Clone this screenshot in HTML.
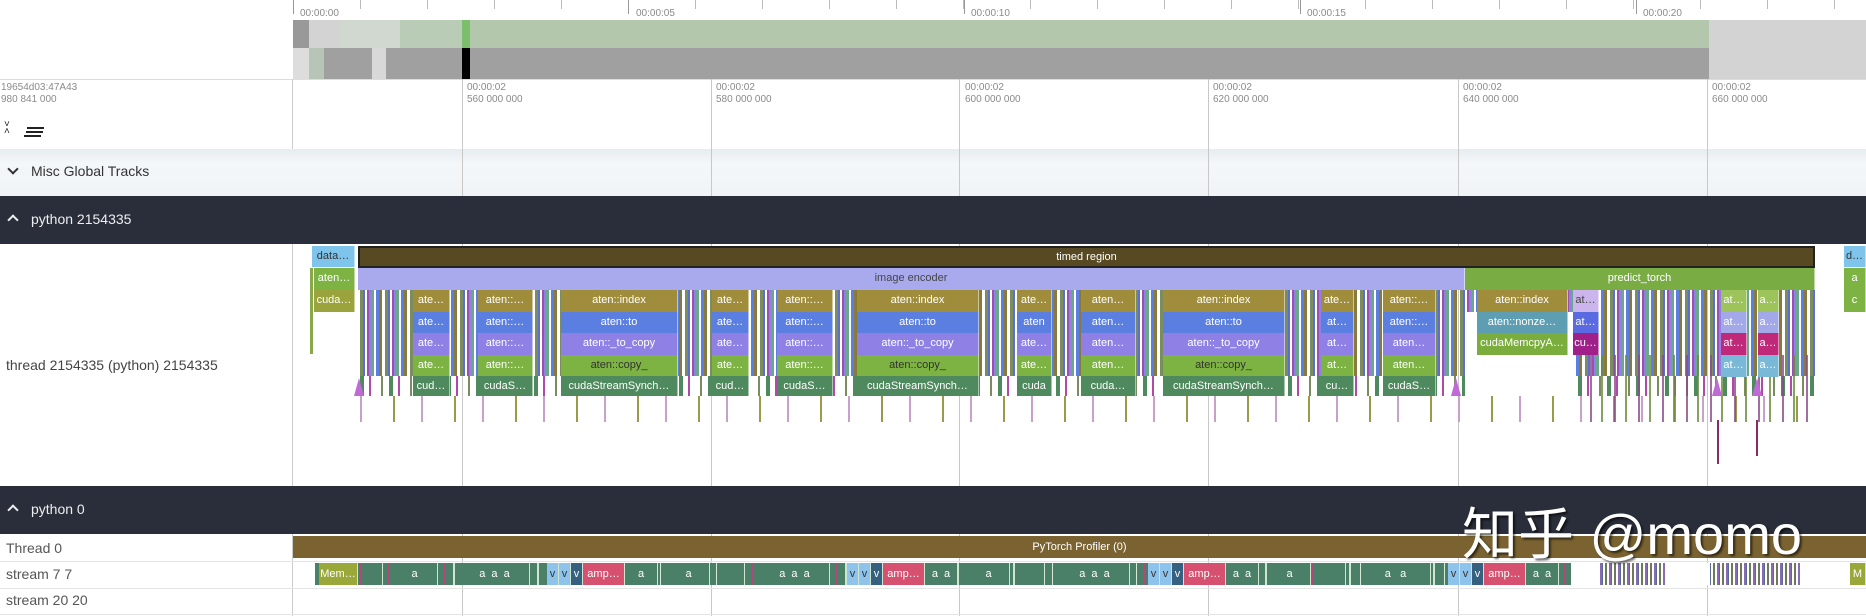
<!DOCTYPE html>
<html><head><meta charset="utf-8"><style>
*{margin:0;padding:0;box-sizing:border-box}
body{width:1866px;height:616px;overflow:hidden;background:#fff;font-family:"Liberation Sans","Noto Sans CJK SC",sans-serif;position:relative}
.a{position:absolute}
.s{position:absolute;height:22px;font-size:11px;color:#fff;text-align:center;line-height:21px;overflow:hidden;white-space:nowrap;border-right:1px solid rgba(255,255,255,.5)}
.tl{position:absolute;font-size:10px;color:#8a8a8a;line-height:12px}
.g{position:absolute;width:1px;background:#dcdcdc}
.lab{position:absolute;left:6px;font-size:14px;color:#444}
.A{background:#a08d3c}.B{background:#5b7fe0}.C{background:#8f80e6}.D{background:#7cb342}.E{background:#4f8a5e}
.st{position:absolute;top:563px;height:22px;font-size:11px;color:#fff;line-height:22px;text-align:center;overflow:hidden;white-space:nowrap;border-right:1px solid #cfe5cf}
</style></head><body>

<div class="a" style="left:293px;top:0;width:1573px;height:9px;background:repeating-linear-gradient(90deg,#bbb 0 1px,transparent 1px 67px)"></div>
<div class="a" style="left:293px;top:0;width:1px;height:14px;background:#999"></div>
<div class="a" style="left:628px;top:0;width:1px;height:14px;background:#999"></div>
<div class="a" style="left:964px;top:0;width:1px;height:14px;background:#999"></div>
<div class="a" style="left:1300px;top:0;width:1px;height:14px;background:#999"></div>
<div class="a" style="left:1636px;top:0;width:1px;height:14px;background:#999"></div>
<div class="tl" style="left:300px;top:8px">00:00:00</div>
<div class="tl" style="left:636px;top:8px">00:00:05</div>
<div class="tl" style="left:971px;top:8px">00:00:10</div>
<div class="tl" style="left:1307px;top:8px">00:00:15</div>
<div class="tl" style="left:1643px;top:8px">00:00:20</div>

<div class="a" style="left:293px;top:20px;width:1416px;height:28px;background:linear-gradient(90deg,#999 0 16px,#d3d3d3 16px 47px,#d0d8cf 47px 107px,#b9ccb5 107px 169px,#7cbf6a 169px 177px,#b3c7ad 177px)"></div>
<div class="a" style="left:293px;top:48px;width:1416px;height:31px;background:linear-gradient(90deg,#ddd 0 16px,#b7c5b7 16px 31px,#a0a0a0 31px 79px,#d8d8d8 79px 93px,#a0a0a0 93px 169px,#000 169px 177px,#a0a0a0 177px)"></div>
<div class="a" style="left:1709px;top:20px;width:157px;height:59px;background:#d3d3d3"></div>
<div class="a" style="left:0;top:79px;width:1866px;height:1px;background:#ddd"></div>

<div class="tl" style="left:1px;top:82px">19654d03:47A43<br>980 841 000</div>
<div class="a" style="left:4px;top:121px;font-size:10px;line-height:7px;color:#222">˅<br>˄</div>
<div class="a" style="left:27px;top:127px;width:17px;height:2px;background:#222;box-shadow:-1px 4px 0 #222,-3px 8px 0 #222"></div>
<div class="a" style="left:292px;top:79px;width:1px;height:537px;background:#ccc"></div>
<div class="tl" style="left:467px;top:82px">00:00:02<br>560 000 000</div>
<div class="tl" style="left:716px;top:82px">00:00:02<br>580 000 000</div>
<div class="tl" style="left:965px;top:82px">00:00:02<br>600 000 000</div>
<div class="tl" style="left:1213px;top:82px">00:00:02<br>620 000 000</div>
<div class="tl" style="left:1463px;top:82px">00:00:02<br>640 000 000</div>
<div class="tl" style="left:1712px;top:82px">00:00:02<br>660 000 000</div>

<div class="a" style="left:0;top:149px;width:1866px;height:47px;background:linear-gradient(#e6ecf0,#f4f7f9 30%,#f0f4f6)"></div>
<div class="a" style="left:6px;top:163px;font-size:14px;color:#333"><span style="display:inline-block;width:8px;height:8px;border-right:2px solid #333;border-bottom:2px solid #333;transform:rotate(45deg);margin:0 14px 3px 3px"></span>Misc Global Tracks</div>

<div class="g" style="left:462px;top:79px;height:537px;background:#c8c8c8"></div>
<div class="g" style="left:711px;top:79px;height:537px;background:#c8c8c8"></div>
<div class="g" style="left:959px;top:79px;height:537px;background:#c8c8c8"></div>
<div class="g" style="left:1208px;top:79px;height:537px;background:#c8c8c8"></div>
<div class="g" style="left:1458px;top:79px;height:537px;background:#c8c8c8"></div>
<div class="g" style="left:1707px;top:79px;height:537px;background:#c8c8c8"></div>

<div class="a" style="left:0;top:196px;width:1866px;height:48px;background:#2a2e3a"></div>
<div class="a" style="left:6px;top:211px;font-size:14px;color:#eee"><span style="display:inline-block;width:8px;height:8px;border-left:2px solid #eee;border-top:2px solid #eee;transform:rotate(45deg);margin:0 14px 0 3px"></span>python 2154335</div>

<div class="lab" style="top:357px">thread 2154335 (python) 2154335</div>

<div class="s" style="left:312px;top:246px;width:43px;height:21px;background:#7fc4ea;color:#333">data…</div>
<div class="s" style="left:314px;top:268px;width:41px;background:#7cb342">aten…</div>
<div class="s" style="left:314px;top:290px;width:41px;background:#9aa33c">cuda…</div>
<div class="a" style="left:310px;top:268px;width:3px;height:86px;background:#88a84a"></div>

<div class="s" style="left:358px;top:246px;width:1457px;height:22px;background:#574a22;border:2px solid #222;line-height:18px">timed region</div>
<div class="s" style="left:358px;top:268px;width:1107px;background:#a9aaee;color:#444">image encoder</div>
<div class="s" style="left:1465px;top:268px;width:350px;background:#7aac44">predict_torch</div>
<div class="s" style="left:1844px;top:246px;width:22px;height:21px;background:#7fc4ea;color:#333">d…</div>
<div class="s" style="left:1844px;top:268px;width:22px;background:#7cb342">a</div>
<div class="s" style="left:1844px;top:290px;width:22px;background:#7cb342">c</div>

<!-- noise stripes (denser) -->
<div class="a" style="left:360px;top:290px;width:1455px;height:86px;background:repeating-linear-gradient(90deg,#7b8c5e 0 3px,#5a6fd0 3px 5px,transparent 5px 7px,#9b4fae 7px 9px,#8f80e6 9px 11px,#6aa88a 11px 14px,transparent 14px 16px,#5b7fe0 16px 19px,#8a7a3a 19px 22px,transparent 22px 25px)"></div>
<div class="a" style="left:360px;top:376px;width:1455px;height:20px;background:repeating-linear-gradient(90deg,#4f8a5e 0 4px,transparent 4px 9px,#b04aa8 9px 11px,transparent 11px 21px,#7b8c5e 21px 23px,transparent 23px 29px)"></div>
<div class="a" style="left:360px;top:396px;width:1455px;height:26px;background:repeating-linear-gradient(90deg,#c9a0c9 0 2px,transparent 2px 33px,#9a9a4a 33px 35px,transparent 35px 61px)"></div>
<div class="a" style="left:1465px;top:312px;width:10px;height:110px;background:#fff"></div>
<div class="a" style="left:1590px;top:355px;width:225px;height:67px;background:repeating-linear-gradient(90deg,#8a4a8a 0 2px,transparent 2px 11px,#6a8a3a 11px 13px,transparent 13px 24px);opacity:.8"></div>

<div class="s A" style="left:413px;top:290px;width:37px">ate…</div><div class="s B" style="left:413px;top:312px;width:37px">ate…</div><div class="s C" style="left:413px;top:333px;width:37px">ate…</div><div class="s D" style="left:413px;top:355px;width:37px">ate…</div><div class="s E" style="left:413px;top:376px;width:37px;height:20px">cud…</div>
<div class="s A" style="left:478px;top:290px;width:55px">aten::…</div><div class="s B" style="left:478px;top:312px;width:55px">aten::…</div><div class="s C" style="left:478px;top:333px;width:55px">aten::…</div><div class="s D" style="left:478px;top:355px;width:55px">aten::…</div><div class="s E" style="left:478px;top:376px;width:55px;height:20px">cudaS…</div>
<div class="s A" style="left:561px;top:290px;width:117px">aten::index</div><div class="s B" style="left:561px;top:312px;width:117px">aten::to</div><div class="s C" style="left:561px;top:333px;width:117px">aten::_to_copy</div><div class="s D" style="left:561px;top:355px;width:117px;color:#333">aten::copy_</div><div class="s E" style="left:561px;top:376px;width:117px;height:20px">cudaStreamSynch…</div>
<div class="s A" style="left:712px;top:290px;width:37px">ate…</div><div class="s B" style="left:712px;top:312px;width:37px">ate…</div><div class="s C" style="left:712px;top:333px;width:37px">ate…</div><div class="s D" style="left:712px;top:355px;width:37px">ate…</div><div class="s E" style="left:712px;top:376px;width:37px;height:20px">cud…</div>
<div class="s A" style="left:777px;top:290px;width:56px">aten::…</div><div class="s B" style="left:777px;top:312px;width:56px">aten::…</div><div class="s C" style="left:777px;top:333px;width:56px">aten::…</div><div class="s D" style="left:777px;top:355px;width:56px">aten::…</div><div class="s E" style="left:777px;top:376px;width:56px;height:20px">cudaS…</div>
<div class="s A" style="left:857px;top:290px;width:122px">aten::index</div><div class="s B" style="left:857px;top:312px;width:122px">aten::to</div><div class="s C" style="left:857px;top:333px;width:122px">aten::_to_copy</div><div class="s D" style="left:857px;top:355px;width:122px;color:#333">aten::copy_</div><div class="s E" style="left:857px;top:376px;width:122px;height:20px">cudaStreamSynch…</div>
<div class="s A" style="left:1017px;top:290px;width:35px">ate…</div><div class="s B" style="left:1017px;top:312px;width:35px">aten</div><div class="s C" style="left:1017px;top:333px;width:35px">ate…</div><div class="s D" style="left:1017px;top:355px;width:35px">ate…</div><div class="s E" style="left:1017px;top:376px;width:35px;height:20px">cuda</div>
<div class="s A" style="left:1081px;top:290px;width:55px">aten…</div><div class="s B" style="left:1081px;top:312px;width:55px">aten…</div><div class="s C" style="left:1081px;top:333px;width:55px">aten…</div><div class="s D" style="left:1081px;top:355px;width:55px">aten…</div><div class="s E" style="left:1081px;top:376px;width:55px;height:20px">cuda…</div>
<div class="s A" style="left:1163px;top:290px;width:122px">aten::index</div><div class="s B" style="left:1163px;top:312px;width:122px">aten::to</div><div class="s C" style="left:1163px;top:333px;width:122px">aten::_to_copy</div><div class="s D" style="left:1163px;top:355px;width:122px;color:#333">aten::copy_</div><div class="s E" style="left:1163px;top:376px;width:122px;height:20px">cudaStreamSynch…</div>
<div class="s A" style="left:1321px;top:290px;width:33px">ate…</div><div class="s B" style="left:1321px;top:312px;width:33px">at…</div><div class="s C" style="left:1321px;top:333px;width:33px">at…</div><div class="s D" style="left:1321px;top:355px;width:33px">at…</div><div class="s E" style="left:1321px;top:376px;width:33px;height:20px">cu…</div>
<div class="s A" style="left:1383px;top:290px;width:53px">aten::…</div><div class="s B" style="left:1383px;top:312px;width:53px">aten::…</div><div class="s C" style="left:1383px;top:333px;width:53px">aten…</div><div class="s D" style="left:1383px;top:355px;width:53px">aten…</div><div class="s E" style="left:1383px;top:376px;width:53px;height:20px">cudaS…</div>

<div class="a" style="left:1475px;top:312px;width:100px;height:84px;background:#fff"></div>
<div class="s A" style="left:1477px;top:290px;width:91px">aten::index</div><div class="s" style="left:1477px;top:312px;width:91px;background:#5e9eb2">aten::nonze…</div><div class="s D" style="left:1477px;top:333px;width:91px;background:#7aad3c">cudaMemcpyA…</div>
<div class="s" style="left:1573px;top:290px;width:26px;background:#cbb5ec;color:#444">at…</div><div class="s" style="left:1573px;top:312px;width:26px;background:#5a6ae0">at…</div><div class="s" style="left:1573px;top:333px;width:26px;background:#a0208a">cu…</div>
<div class="s" style="left:1721px;top:290px;width:26px;background:#9cc45a">at…</div><div class="s" style="left:1721px;top:312px;width:26px;background:#a3a8e8">at…</div><div class="s" style="left:1721px;top:333px;width:26px;background:#c0287a">at…</div><div class="s" style="left:1721px;top:355px;width:26px;background:#7ab8d8">at…</div>
<div class="s" style="left:1758px;top:290px;width:21px;background:#9cc45a">a…</div><div class="s" style="left:1758px;top:312px;width:21px;background:#a3a8e8">a…</div><div class="s" style="left:1758px;top:333px;width:21px;background:#c0287a">a…</div><div class="s" style="left:1758px;top:355px;width:21px;background:#7ab8d8">a…</div>

<div class="a" style="left:354px;top:378px;width:0;height:0;border-left:5px solid transparent;border-right:5px solid transparent;border-bottom:18px solid #c06ad8"></div>
<div class="a" style="left:1451px;top:378px;border-left:5px solid transparent;border-right:5px solid transparent;border-bottom:18px solid #c06ad8"></div>
<div class="a" style="left:1712px;top:378px;border-left:5px solid transparent;border-right:5px solid transparent;border-bottom:18px solid #c06ad8"></div>
<div class="a" style="left:1752px;top:378px;border-left:5px solid transparent;border-right:5px solid transparent;border-bottom:18px solid #c06ad8"></div>
<div class="a" style="left:1717px;top:420px;width:2px;height:44px;background:#8a2a6a"></div>
<div class="a" style="left:1756px;top:420px;width:2px;height:36px;background:#8a2a6a"></div>

<div class="a" style="left:0;top:486px;width:1866px;height:48px;background:#2a2e3a"></div>
<div class="a" style="left:6px;top:501px;font-size:14px;color:#eee"><span style="display:inline-block;width:8px;height:8px;border-left:2px solid #eee;border-top:2px solid #eee;transform:rotate(45deg);margin:0 14px 0 3px"></span>python 0</div>

<div class="lab" style="top:540px;color:#555">Thread 0</div>
<div class="a" style="left:0;top:561px;width:1866px;height:1px;background:#e4e4e4"></div>
<div class="lab" style="top:566px;color:#555">stream 7 7</div>
<div class="a" style="left:0;top:588px;width:1866px;height:1px;background:#e4e4e4"></div>
<div class="lab" style="top:592px;color:#555">stream 20 20</div>
<div class="a" style="left:0;top:614px;width:1866px;height:1px;background:#e4e4e4"></div>

<div class="s" style="left:293px;top:536px;width:1573px;height:22px;line-height:22px;background:#7a6330;border:none">PyTorch Profiler (0)</div>

<!-- stream 7 7 background fill -->
<div class="a" style="left:315px;top:563px;width:1256px;height:22px;background:repeating-linear-gradient(90deg,#4a7f68 0 9px,#d8ead8 9px 10px,#4a7f68 10px 17px,#b04a7a 17px 18px,#4a7f68 18px 26px,#cfe5cf 26px 28px)"></div>
<div class="st" style="left:319px;width:39px;background:#9aa83a">Mem…</div>
<div class="st" style="left:361px;width:22px;background:#4a7f68"></div>
<div class="st" style="left:392px;width:46px;background:#4a7f68">a</div>
<div class="st" style="left:460px;width:70px;background:#4a7f68">a &nbsp;a &nbsp;a</div>
<div class="st" style="left:547px;width:12px;background:#8ec4ec;color:#333">v</div><div class="st" style="left:559px;width:12px;background:#8ec4ec;color:#333">v</div><div class="st" style="left:571px;width:12px;background:#35607f">v</div><div class="st" style="left:583px;width:42px;background:#d6506f">amp…</div><div class="st" style="left:625px;width:33px;background:#4a7f68">a</div><div class="st" style="left:668px;width:42px;background:#4a7f68">a</div><div class="st" style="left:720px;width:25px;background:#4a7f68"></div><div class="st" style="left:760px;width:70px;background:#4a7f68">a &nbsp;a &nbsp;a</div>
<div class="st" style="left:847px;width:12px;background:#8ec4ec;color:#333">v</div><div class="st" style="left:859px;width:12px;background:#8ec4ec;color:#333">v</div><div class="st" style="left:871px;width:12px;background:#35607f">v</div><div class="st" style="left:883px;width:42px;background:#d6506f">amp…</div><div class="st" style="left:925px;width:33px;background:#4a7f68">a &nbsp;a</div><div class="st" style="left:968px;width:42px;background:#4a7f68">a</div><div class="st" style="left:1020px;width:25px;background:#4a7f68"></div><div class="st" style="left:1060px;width:70px;background:#4a7f68">a &nbsp;a &nbsp;a</div>
<div class="st" style="left:1148px;width:12px;background:#8ec4ec;color:#333">v</div><div class="st" style="left:1160px;width:12px;background:#8ec4ec;color:#333">v</div><div class="st" style="left:1172px;width:12px;background:#35607f">v</div><div class="st" style="left:1184px;width:42px;background:#d6506f">amp…</div><div class="st" style="left:1226px;width:33px;background:#4a7f68">a &nbsp;a</div><div class="st" style="left:1269px;width:42px;background:#4a7f68">a</div><div class="st" style="left:1321px;width:25px;background:#4a7f68"></div><div class="st" style="left:1361px;width:70px;background:#4a7f68">a &nbsp;&nbsp;a</div>
<div class="st" style="left:1448px;width:12px;background:#8ec4ec;color:#333">v</div><div class="st" style="left:1460px;width:12px;background:#8ec4ec;color:#333">v</div><div class="st" style="left:1472px;width:12px;background:#35607f">v</div><div class="st" style="left:1484px;width:42px;background:#d6506f">amp…</div><div class="st" style="left:1526px;width:33px;background:#4a7f68">a &nbsp;a</div>
<div class="a" style="left:1600px;top:563px;width:200px;height:22px;background:repeating-linear-gradient(90deg,#8a6ab0 0 2px,#5a6a9a 2px 3px,transparent 3px 5px,#6a7a5a 5px 7px,transparent 7px 9px)"></div>
<div class="a" style="left:1665px;top:563px;width:45px;height:22px;background:#fff"></div>
<div class="st" style="left:1850px;width:16px;background:#9aa83a">M</div>

<div class="a" style="left:1462px;top:504px;font-size:56px;color:#fff;text-shadow:2px 2px 2px rgba(0,0,0,.6);white-space:nowrap;font-family:'Liberation Sans','Noto Sans CJK SC',sans-serif;line-height:62px">知乎 @momo</div>
</body></html>
